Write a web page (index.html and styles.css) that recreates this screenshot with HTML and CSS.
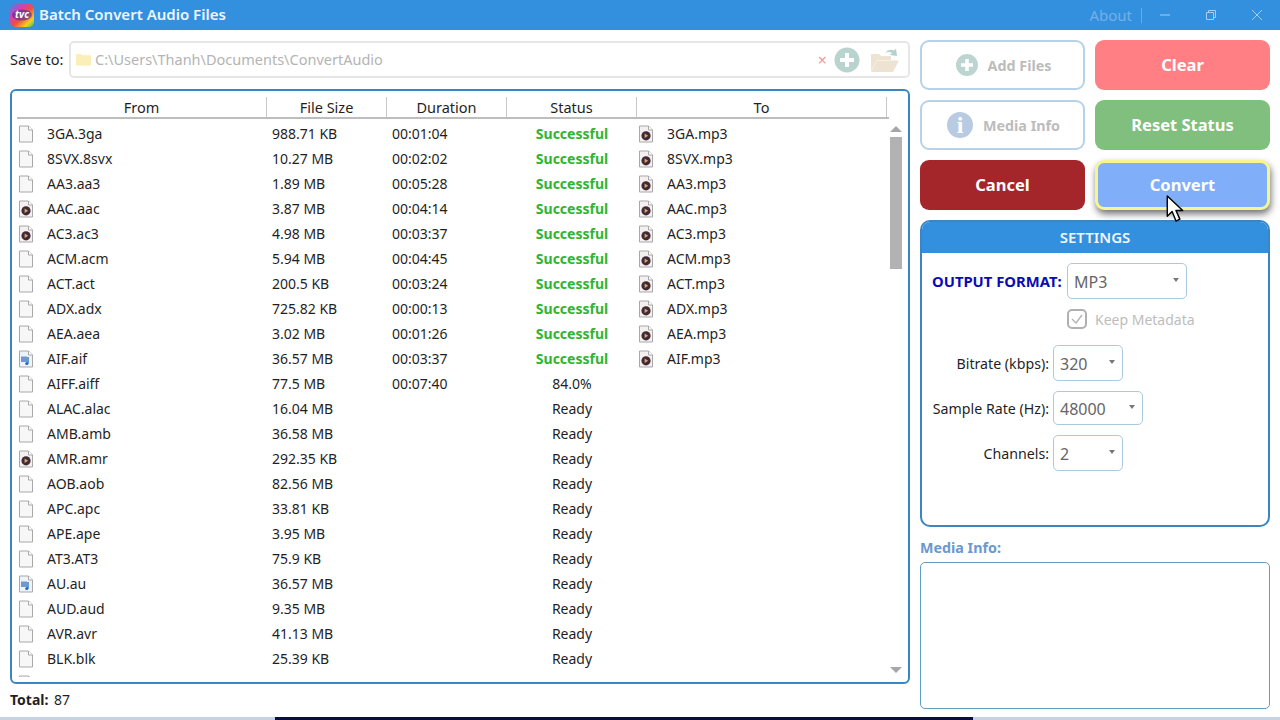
FILE: index.html
```html
<!DOCTYPE html>
<html lang="en">
  <head>
    <meta charset="UTF-8" />
    <title>Batch Convert Audio Files</title>
    <link rel="stylesheet" href="styles.css">
  </head>
  <body>
    <svg class="icon-defs" width="0" height="0">
      <defs>
        <linearGradient id="rainbow" x1="0" y1="0" x2="1" y2="1">
          <stop offset="0" stop-color="#2f8fe8" />
          <stop offset="0.3" stop-color="#d63fb4" />
          <stop offset="0.55" stop-color="#f0503c" />
          <stop offset="0.8" stop-color="#f5d020" />
          <stop offset="1" stop-color="#38c060" />
        </linearGradient>
        <symbol id="page" viewBox="0 0 16 18">
          <path d="M1.500 1h9l4 4v12h-13z" fill="#f7f7f7" stroke="#a8a8a8" />
          <path d="M10.500 1v4h4" fill="#fff" stroke="#a8a8a8" />
        </symbol>
        <symbol id="page-play" viewBox="0 0 16 18">
          <path d="M1.500 1h9l4 4v12h-13z" fill="#f5efef" stroke="#a8a8a8" />
          <path d="M10.500 1v4h4" fill="#fff" stroke="#a8a8a8" />
          <circle cx="8" cy="10.800" r="4.600" fill="#3f2b38" />
          <path d="M6.600 8.500l3.600 2.300-3.600 2.300z" fill="#e0a468" />
        </symbol>
        <symbol id="page-audio" viewBox="0 0 16 18">
          <path d="M1.500 1h9l4 4v12h-13z" fill="#eef3fa" stroke="#a8a8a8" />
          <path d="M10.500 1v4h4" fill="#fff" stroke="#a8a8a8" />
          <rect x="3" y="6.500" width="6" height="5.500" fill="#6f97d2" />
          <path d="M10 7v6.500" stroke="#2468c0" stroke-width="1.300" />
          <circle cx="8.800" cy="13.500" r="1.600" fill="#2468c0" />
        </symbol>
      </defs>
    </svg>

    <header class="titlebar">
      <svg class="app-logo" viewBox="0 0 24 23">
        <rect width="24" height="23" rx="5" fill="url(#rainbow)" />
        <ellipse cx="12" cy="11" rx="10" ry="5.500" fill="#4a2aa0" opacity="0.6" />
        <text class="logo-text" x="12" y="14" text-anchor="middle">tvc</text>
      </svg>
      <span class="app-title">Batch Convert Audio Files</span>
      <div class="window-actions">
        <span class="about-link">About</span>
        <svg class="win-btn" viewBox="0 0 46 30"><path d="M18 15h10" stroke="#a9cdf0" /></svg>
        <svg class="win-btn" viewBox="0 0 46 30"><path d="M18.500 12.500h7v7h-7zM20.500 12.500v-2h7v7h-2" fill="none" stroke="#a9cdf0" /></svg>
        <svg class="win-btn" viewBox="0 0 46 30"><path d="M18 10l10 10M28 10l-10 10" stroke="#a9cdf0" /></svg>
      </div>
    </header>

    <main class="content">
      <section class="left-col">
        <div class="save-row">
          <label class="save-label">Save to:</label>
          <div class="save-box">
            <svg class="save-folder" viewBox="0 0 16 13">
              <path d="M0 1.500q0-1 1-1h4l1.500 1.500h8.500q1 0 1 1v9q0 1-1 1h-14q-1 0-1-1z" fill="#fbeeb8" />
            </svg>
            <span class="save-path">C:\Users\Thanh\Documents\ConvertAudio</span>
            <span class="save-clear">×</span>
            <svg class="save-add" viewBox="0 0 26 26">
              <circle cx="13" cy="13" r="12.500" fill="#b9d3cf" />
              <path d="M13 6v14M6 13h14" stroke="#fff" stroke-width="4" />
            </svg>
            <svg class="save-open" viewBox="0 0 30 26">
              <path d="M1 8q0-1 1-1h7l2 2h10v4H7L1 24z" fill="#eee3d2" />
              <path d="M7 13.500h22l-6 11.500H1z" fill="#eee3d2" />
              <path d="M15 6q4-5 9-2.500l2-2 1 7.500-7-1 2-2q-3-2-7 0z" fill="#b4d2cb" />
            </svg>
          </div>
        </div>

        <div class="file-panel">
          <div class="file-head">
            <div class="head-cell">From</div>
            <div class="head-cell">File Size</div>
            <div class="head-cell">Duration</div>
            <div class="head-cell">Status</div>
            <div class="head-cell">To</div>
          </div>
          <div class="file-body">
            <div class="file-rows">
              <div class="file-row"><div class="cell-name"><svg class="file-icon"><use href="#page" /></svg>3GA.3ga</div><div class="cell-text">988.71 KB</div><div class="cell-text">00:01:04</div><div class="cell-status done">Successful</div><div class="cell-name"><svg class="file-icon"><use href="#page-play" /></svg>3GA.mp3</div></div>
              <div class="file-row"><div class="cell-name"><svg class="file-icon"><use href="#page" /></svg>8SVX.8svx</div><div class="cell-text">10.27 MB</div><div class="cell-text">00:02:02</div><div class="cell-status done">Successful</div><div class="cell-name"><svg class="file-icon"><use href="#page-play" /></svg>8SVX.mp3</div></div>
              <div class="file-row"><div class="cell-name"><svg class="file-icon"><use href="#page" /></svg>AA3.aa3</div><div class="cell-text">1.89 MB</div><div class="cell-text">00:05:28</div><div class="cell-status done">Successful</div><div class="cell-name"><svg class="file-icon"><use href="#page-play" /></svg>AA3.mp3</div></div>
              <div class="file-row"><div class="cell-name"><svg class="file-icon"><use href="#page-play" /></svg>AAC.aac</div><div class="cell-text">3.87 MB</div><div class="cell-text">00:04:14</div><div class="cell-status done">Successful</div><div class="cell-name"><svg class="file-icon"><use href="#page-play" /></svg>AAC.mp3</div></div>
              <div class="file-row"><div class="cell-name"><svg class="file-icon"><use href="#page-play" /></svg>AC3.ac3</div><div class="cell-text">4.98 MB</div><div class="cell-text">00:03:37</div><div class="cell-status done">Successful</div><div class="cell-name"><svg class="file-icon"><use href="#page-play" /></svg>AC3.mp3</div></div>
              <div class="file-row"><div class="cell-name"><svg class="file-icon"><use href="#page" /></svg>ACM.acm</div><div class="cell-text">5.94 MB</div><div class="cell-text">00:04:45</div><div class="cell-status done">Successful</div><div class="cell-name"><svg class="file-icon"><use href="#page-play" /></svg>ACM.mp3</div></div>
              <div class="file-row"><div class="cell-name"><svg class="file-icon"><use href="#page" /></svg>ACT.act</div><div class="cell-text">200.5 KB</div><div class="cell-text">00:03:24</div><div class="cell-status done">Successful</div><div class="cell-name"><svg class="file-icon"><use href="#page-play" /></svg>ACT.mp3</div></div>
              <div class="file-row"><div class="cell-name"><svg class="file-icon"><use href="#page" /></svg>ADX.adx</div><div class="cell-text">725.82 KB</div><div class="cell-text">00:00:13</div><div class="cell-status done">Successful</div><div class="cell-name"><svg class="file-icon"><use href="#page-play" /></svg>ADX.mp3</div></div>
              <div class="file-row"><div class="cell-name"><svg class="file-icon"><use href="#page" /></svg>AEA.aea</div><div class="cell-text">3.02 MB</div><div class="cell-text">00:01:26</div><div class="cell-status done">Successful</div><div class="cell-name"><svg class="file-icon"><use href="#page-play" /></svg>AEA.mp3</div></div>
              <div class="file-row"><div class="cell-name"><svg class="file-icon"><use href="#page-audio" /></svg>AIF.aif</div><div class="cell-text">36.57 MB</div><div class="cell-text">00:03:37</div><div class="cell-status done">Successful</div><div class="cell-name"><svg class="file-icon"><use href="#page-play" /></svg>AIF.mp3</div></div>
              <div class="file-row"><div class="cell-name"><svg class="file-icon"><use href="#page" /></svg>AIFF.aiff</div><div class="cell-text">77.5 MB</div><div class="cell-text">00:07:40</div><div class="cell-status">84.0%</div><div class="cell-name"></div></div>
              <div class="file-row"><div class="cell-name"><svg class="file-icon"><use href="#page" /></svg>ALAC.alac</div><div class="cell-text">16.04 MB</div><div class="cell-text"></div><div class="cell-status">Ready</div><div class="cell-name"></div></div>
              <div class="file-row"><div class="cell-name"><svg class="file-icon"><use href="#page" /></svg>AMB.amb</div><div class="cell-text">36.58 MB</div><div class="cell-text"></div><div class="cell-status">Ready</div><div class="cell-name"></div></div>
              <div class="file-row"><div class="cell-name"><svg class="file-icon"><use href="#page-play" /></svg>AMR.amr</div><div class="cell-text">292.35 KB</div><div class="cell-text"></div><div class="cell-status">Ready</div><div class="cell-name"></div></div>
              <div class="file-row"><div class="cell-name"><svg class="file-icon"><use href="#page" /></svg>AOB.aob</div><div class="cell-text">82.56 MB</div><div class="cell-text"></div><div class="cell-status">Ready</div><div class="cell-name"></div></div>
              <div class="file-row"><div class="cell-name"><svg class="file-icon"><use href="#page" /></svg>APC.apc</div><div class="cell-text">33.81 KB</div><div class="cell-text"></div><div class="cell-status">Ready</div><div class="cell-name"></div></div>
              <div class="file-row"><div class="cell-name"><svg class="file-icon"><use href="#page" /></svg>APE.ape</div><div class="cell-text">3.95 MB</div><div class="cell-text"></div><div class="cell-status">Ready</div><div class="cell-name"></div></div>
              <div class="file-row"><div class="cell-name"><svg class="file-icon"><use href="#page" /></svg>AT3.AT3</div><div class="cell-text">75.9 KB</div><div class="cell-text"></div><div class="cell-status">Ready</div><div class="cell-name"></div></div>
              <div class="file-row"><div class="cell-name"><svg class="file-icon"><use href="#page-audio" /></svg>AU.au</div><div class="cell-text">36.57 MB</div><div class="cell-text"></div><div class="cell-status">Ready</div><div class="cell-name"></div></div>
              <div class="file-row"><div class="cell-name"><svg class="file-icon"><use href="#page" /></svg>AUD.aud</div><div class="cell-text">9.35 MB</div><div class="cell-text"></div><div class="cell-status">Ready</div><div class="cell-name"></div></div>
              <div class="file-row"><div class="cell-name"><svg class="file-icon"><use href="#page" /></svg>AVR.avr</div><div class="cell-text">41.13 MB</div><div class="cell-text"></div><div class="cell-status">Ready</div><div class="cell-name"></div></div>
              <div class="file-row"><div class="cell-name"><svg class="file-icon"><use href="#page" /></svg>BLK.blk</div><div class="cell-text">25.39 KB</div><div class="cell-text"></div><div class="cell-status">Ready</div><div class="cell-name"></div></div>
              <div class="file-row"><div class="cell-name"><svg class="file-icon"><use href="#page" /></svg></div></div>
            </div>
            <div class="scrollbar">
              <div class="arrow-up"></div>
              <div class="scroll-thumb"></div>
              <div class="arrow-down"></div>
            </div>
          </div>
        </div>

        <div class="total-row"><b>Total:</b> 87</div>
      </section>

      <aside class="right-col">
        <div class="button-grid">
          <button class="btn btn-off">
            <svg class="btn-icon-add" viewBox="0 0 22 22">
              <circle cx="11" cy="11" r="11" fill="#bcd5d0" />
              <path d="M11 5v12M5 11h12" stroke="#fff" stroke-width="3.600" />
            </svg>
            Add Files
          </button>
          <button class="btn btn-clear">Clear</button>
          <button class="btn btn-off">
            <span class="btn-icon-info">i</span>
            Media Info
          </button>
          <button class="btn btn-reset">Reset Status</button>
          <button class="btn btn-cancel">Cancel</button>
          <button class="btn btn-convert">Convert</button>
        </div>

        <div class="settings">
          <div class="settings-title">SETTINGS</div>
          <div class="settings-body">
            <div class="format-row">
              <span class="format-label">OUTPUT FORMAT:</span>
              <div class="select select-format">MP3<span class="caret"></span></div>
            </div>
            <div class="meta-row">
              <svg class="meta-check" viewBox="0 0 20 20">
                <rect x="1" y="1" width="18" height="18" rx="4" fill="#fff" stroke="#b0b0b0" stroke-width="2" />
                <path d="M5 10l4 4 6-8" fill="none" stroke="#b0b0b0" stroke-width="1.300" />
              </svg>
              <span class="meta-label">Keep Metadata</span>
            </div>
            <div class="option-row">
              <span class="option-label">Bitrate (kbps):</span>
              <div class="select select-small">320<span class="caret"></span></div>
            </div>
            <div class="option-row">
              <span class="option-label">Sample Rate (Hz):</span>
              <div class="select select-wide">48000<span class="caret"></span></div>
            </div>
            <div class="option-row">
              <span class="option-label">Channels:</span>
              <div class="select select-small">2<span class="caret"></span></div>
            </div>
          </div>
        </div>

        <div class="media-label">Media Info:</div>
        <div class="media-box"></div>
      </aside>
    </main>

    <div class="bottom-strip">
      <div class="strip-light strip-left"></div>
      <div class="strip-dark"></div>
      <div class="strip-light strip-right"></div>
    </div>

    <svg class="mouse-cursor" viewBox="0 0 20 29">
      <path d="M2 1v21l5-5 4 10 4-2-4-9h7z" fill="#fff" stroke="#000" stroke-width="1.500" stroke-linejoin="round" />
    </svg>
  </body>
</html>
```

FILE: styles.css
```css
* {
  box-sizing: border-box;
}
html,
body {
  margin: 0;
  padding: 0;
}
body {
  position: relative;
  width: 1280px;
  height: 720px;
  overflow: hidden;
  display: flex;
  flex-direction: column;
  background-color: #fff;
  color: #1f1f1f;
  font-family: "Noto Sans", "Open Sans", sans-serif;
  font-size: 14px;
}
.icon-defs {
  position: absolute;
}

/* title bar */
.titlebar {
  height: 30px;
  flex: none;
  display: flex;
  align-items: center;
  padding-left: 10px;
  background-color: #3390de;
}
.app-logo {
  width: 24px;
  height: 23px;
}
.logo-text {
  fill: #fff;
  font-size: 10px;
  font-style: italic;
  font-weight: 700;
}
.app-title {
  margin: 0 0 2px 5px;
  color: #eef6fd;
  font-size: 15px;
  font-weight: 600;
}
.window-actions {
  margin-left: auto;
  display: flex;
  align-items: center;
}
.about-link {
  padding-right: 9px;
  border-right: 1px solid #6fa9e0;
  line-height: 15px;
  color: #76aee5;
  font-size: 15px;
}
.win-btn {
  width: 46px;
  height: 30px;
}

/* main area */
.content {
  flex: 1;
  min-height: 0;
  display: flex;
  gap: 10px;
  padding: 10px 10px 0;
}
.left-col {
  width: 900px;
  display: flex;
  flex-direction: column;
}
.save-row {
  height: 37px;
  margin-top: 1px;
  display: flex;
  align-items: center;
}
.save-label {
  width: 59px;
  flex: none;
  margin-bottom: 1px;
  font-size: 14.500px;
}
.save-box {
  flex: 1;
  height: 100%;
  display: flex;
  align-items: center;
  padding-left: 5px;
  border: 2px solid #e6e6e6;
  border-radius: 5px;
}
.save-folder {
  width: 15px;
  height: 13px;
  flex: none;
}
.save-path {
  margin: 0 0 1px 4px;
  color: #b4b4b4;
  font-size: 14.500px;
}
.save-clear {
  margin-left: auto;
  color: #ec9a9a;
  font-size: 16px;
}
.save-add {
  width: 26px;
  height: 26px;
  margin-left: 7px;
}
.save-open {
  width: 30px;
  height: 26px;
  margin: 0 8px 0 10px;
}

/* file list */
.file-panel {
  height: 595px;
  margin-top: 11px;
  padding: 6px 0 0 5px;
  border: 2px solid #3a86c2;
  border-radius: 6px;
  overflow: hidden;
}
.file-head {
  width: 872px;
  height: 22px;
  display: grid;
  grid-template-columns: 250px 120px 120px 130px 250px;
  border-bottom: 2px solid #bdbdbd;
}
.head-cell {
  text-align: center;
  line-height: 20px;
  border-right: 1px solid #c8c8c8;
  font-size: 14.500px;
}
.file-body {
  display: flex;
  margin-top: 2px;
}
.file-rows {
  width: 870px;
  height: 556px;
  overflow: hidden;
}
.file-row {
  height: 25px;
  display: grid;
  grid-template-columns: 250px 120px 120px 130px 250px;
  align-items: center;
}
.cell-name {
  display: flex;
  align-items: center;
  padding-left: 1px;
}
.file-icon {
  width: 16px;
  height: 18px;
  margin-right: 13px;
  flex: none;
}
.cell-text {
  padding-left: 5px;
}
.cell-status {
  text-align: center;
}
.done {
  color: #2fb52f;
  font-weight: 700;
}
.scrollbar {
  width: 12px;
  margin-left: 3px;
  display: flex;
  flex-direction: column;
  align-items: center;
}
.arrow-up,
.arrow-down {
  width: 0;
  height: 0;
  border-left: 6px solid transparent;
  border-right: 6px solid transparent;
}
.arrow-up {
  margin-top: 5px;
  border-bottom: 6px solid #a6a6a6;
}
.arrow-down {
  margin-top: auto;
  margin-bottom: 4px;
  border-top: 6px solid #a6a6a6;
}
.scroll-thumb {
  width: 12px;
  height: 132px;
  margin-top: 5px;
  background-color: #b2b2b2;
}
.total-row {
  margin-top: 6px;
  word-spacing: 1px;
}
.total-row b {
  margin-right: 1px;
}

/* buttons */
.right-col {
  width: 350px;
  display: flex;
  flex-direction: column;
}
.button-grid {
  display: grid;
  grid-template-columns: 165px 175px;
  grid-auto-rows: 50px;
  gap: 10px;
}
.btn {
  display: flex;
  align-items: center;
  justify-content: center;
  gap: 10px;
  padding: 0 0 2px;
  border: none;
  border-radius: 9px;
  color: #fff;
  font-family: inherit;
  font-size: 16.500px;
  font-weight: 700;
}
.btn-off {
  padding: 0 0 0 2px;
  border: 2px solid #b6d2ea;
  background-color: #fff;
  color: #bcbcbc;
  font-size: 14.300px;
}
.btn-icon-add {
  width: 22px;
  height: 22px;
}
.btn-icon-info {
  width: 26px;
  height: 26px;
  border-radius: 50%;
  background-color: #b8cbe2;
  color: #fff;
  line-height: 26px;
  text-align: center;
  font-family: "Liberation Serif", serif;
  font-size: 24px;
}
.btn-clear {
  background-color: #ff7f84;
}
.btn-reset {
  background-color: #80bf7d;
}
.btn-cancel {
  background-color: #a4262a;
}
.btn-convert {
  border: 3px solid #f6f690;
  background-color: #80aef8;
  box-shadow: 1px 4px 7px rgba(0, 0, 0, 0.55);
}

/* settings */
.settings {
  height: 307px;
  margin-top: 10px;
  border: 2px solid #3a86c2;
  border-radius: 10px;
  overflow: hidden;
}
.settings-title {
  height: 31px;
  background-color: #3390de;
  color: #eef6fd;
  text-align: center;
  line-height: 30px;
  font-size: 15px;
  font-weight: 600;
}
.settings-body {
  padding: 10px 0 0 10px;
}
.format-row {
  display: flex;
  align-items: center;
  gap: 5px;
}
.format-label {
  width: 130px;
  color: #0a0ab4;
  font-size: 14.800px;
  font-weight: 700;
  white-space: nowrap;
}
.select {
  position: relative;
  display: flex;
  align-items: center;
  padding: 1px 0 0 6px;
  border: 1px solid #a9cbdc;
  border-radius: 5px;
  color: #666;
  font-size: 16px;
}
.caret {
  position: absolute;
  right: 7px;
  top: 50%;
  margin-top: -3px;
  border-left: 3.500px solid transparent;
  border-right: 3.500px solid transparent;
  border-top: 4px solid #777;
}
.select-format {
  width: 120px;
  height: 36px;
}
.select-small {
  width: 70px;
  height: 36px;
}
.select-wide {
  width: 90px;
  height: 34px;
}
.meta-row {
  display: flex;
  align-items: center;
  height: 20px;
  margin: 10px 0 0 135px;
}
.meta-check {
  width: 20px;
  height: 20px;
}
.meta-label {
  margin-left: 8px;
  color: #bdbdbd;
}
.option-row {
  display: flex;
  align-items: center;
  gap: 4px;
  margin-top: 10px;
}
.meta-row + .option-row {
  margin-top: 16px;
}
.option-label {
  width: 117px;
  text-align: right;
  white-space: nowrap;
  font-size: 14.200px;
}

/* media info */
.media-label {
  margin-top: 11px;
  color: #6a98d2;
  font-size: 14.300px;
  font-weight: 700;
}
.media-box {
  height: 147px;
  margin-top: 5px;
  border: 1px solid #5f9cc6;
  border-radius: 5px;
}

/* leftover of the window behind, along the bottom edge */
.bottom-strip {
  height: 3px;
  flex: none;
  display: flex;
}
.strip-light {
  background-color: #c3d3e4;
}
.strip-left {
  width: 275px;
}
.strip-dark {
  width: 698px;
  background-color: #0a0f3c;
}
.strip-right {
  flex: 1;
}

.mouse-cursor {
  position: absolute;
  left: 1165px;
  top: 195px;
  width: 20px;
  height: 28px;
}
```
